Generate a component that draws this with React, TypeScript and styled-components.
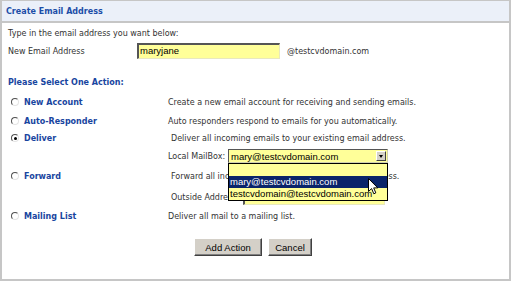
import styled, { createGlobalStyle } from "styled-components";

const GlobalStyle = createGlobalStyle`
  body {
    margin: 0;
    background: #fff;
  }
`;

const verdana = `"DejaVu Sans", Verdana, sans-serif`;
const arial = `"Liberation Sans", Arial, sans-serif`;

const Panel = styled.div`
  width: 511px;
  height: 281px;
  box-sizing: border-box;
  border: 2px solid #c6c6c6;
  border-top-width: 1px;
  font-family: ${verdana};
  font-size: 8px;
  color: #333;
`;

const Header = styled.div`
  height: 20px;
  line-height: 21px;
  padding-left: 4px;
  background: #ebf0f9;
  border-bottom: 2px solid #c6c6c6;
  font-weight: bold;
  color: #1c4ea8;
`;

const Body = styled.div`
  padding: 4px 0 0 6px;
`;

const Line = styled.div`
  line-height: 14px;
`;

const EmailRow = styled.div`
  display: flex;
  align-items: center;
  height: 16px;
  margin-top: 2px;
`;

const FieldLabel = styled.div<{ $w: number }>`
  width: ${(p) => p.$w}px;
  flex: none;
`;

const YellowInput = styled.div<{ $w: number }>`
  width: ${(p) => p.$w}px;
  height: 16px;
  box-sizing: border-box;
  background: #ffff99;
  border-style: solid;
  border-width: 2px 1px 1px 2px;
  border-color: #555 #e8e8c0 #e8e8c0 #555;
  font-family: ${arial};
  font-size: 9.5px;
  color: #000;
  line-height: 12px;
  padding-left: 1px;
  flex: none;
`;

const Domain = styled.div`
  margin-left: 7px;
`;

const SectionTitle = styled.div`
  margin-top: 17px;
  line-height: 14px;
  font-weight: bold;
  color: #1845a0;
`;

const Actions = styled.div`
  margin-top: 2px;
`;

const ActionRow = styled.div<{ $h: number }>`
  display: flex;
  align-items: center;
  height: ${(p) => p.$h}px;
`;

const RadioCell = styled.div`
  width: 16px;
  flex: none;
  padding-left: 3px;
  box-sizing: border-box;
  display: flex;
  align-items: center;
`;

const Radio = styled.span<{ $checked?: boolean }>`
  position: relative;
  width: 8px;
  height: 8px;
  box-sizing: border-box;
  border-radius: 50%;
  border: 1px solid;
  border-color: #505050 #e4e4e4 #e4e4e4 #505050;
  background: #fff;
  &::after {
    content: "";
    display: ${(p) => (p.$checked ? "block" : "none")};
    position: absolute;
    left: 1.5px;
    top: 1.5px;
    width: 3px;
    height: 3px;
    border-radius: 50%;
    background: #000;
  }
`;

const ActionLabel = styled.div`
  width: 144px;
  flex: none;
  font-weight: bold;
  color: #1845a0;
`;

const Desc = styled.div<{ $indent?: number }>`
  padding-left: ${(p) => p.$indent ?? 0}px;
  white-space: nowrap;
  display: flex;
  align-items: center;
`;

const SelectWrap = styled.div`
  position: relative;
  width: 160px;
  height: 14px;
`;

const SelectBox = styled.div`
  width: 160px;
  height: 14px;
  box-sizing: border-box;
  display: flex;
  align-items: center;
  background: #ffff99;
  border-style: solid;
  border-width: 1px;
  border-color: #555 #d0d0b0 #d0d0b0 #555;
  font-family: ${arial};
  font-size: 9.5px;
  color: #000;
  padding-left: 2px;
`;

const SelectText = styled.span`
  flex: 1;
`;

const ArrowButton = styled.span`
  width: 10px;
  height: 10px;
  margin-right: 1px;
  box-sizing: border-box;
  background: #d4d0c8;
  border: 1px solid;
  border-color: #fff #404040 #404040 #fff;
  display: flex;
  align-items: center;
  justify-content: center;
  &::after {
    content: "";
    border-left: 2.5px solid transparent;
    border-right: 2.5px solid transparent;
    border-top: 3px solid #000;
  }
`;

const DropList = styled.div`
  position: absolute;
  left: 0;
  top: 100%;
  width: 160px;
  box-sizing: border-box;
  border: 1px solid #000;
  background: #ffff99;
  z-index: 5;
  font-family: ${arial};
  font-size: 9.5px;
  color: #000;
`;

const DropItem = styled.div<{ $active?: boolean }>`
  height: 12px;
  line-height: 12px;
  padding-left: 1px;
  white-space: nowrap;
  background: ${(p) => (p.$active ? "#0a246a" : "transparent")};
  color: ${(p) => (p.$active ? "#fff" : "#000")};
`;

const Cursor = styled.svg`
  position: absolute;
  left: 139px;
  top: 14px;
`;

const ButtonRow = styled.div`
  display: flex;
  justify-content: center;
  gap: 6px;
  margin-top: 14px;
  padding-right: 11px;
`;

const Button = styled.button<{ $w: number }>`
  width: ${(p) => p.$w}px;
  height: 18px;
  padding: 0;
  background: #d4d0c8;
  border: 1px solid;
  border-color: #fff #404040 #404040 #fff;
  box-shadow: inset -1px -1px #808080;
  font-family: ${arial};
  font-size: 9.5px;
  color: #000;
`;

export default function App() {
  return (
    <>
      <GlobalStyle />
      <Panel>
        <Header>Create Email Address</Header>
        <Body>
          <Line>Type in the email address you want below:</Line>
          <EmailRow>
            <FieldLabel $w={129}>New Email Address</FieldLabel>
            <YellowInput $w={143}>maryjane</YellowInput>
            <Domain>@testcvdomain.com</Domain>
          </EmailRow>

          <SectionTitle>Please Select One Action:</SectionTitle>
          <Actions>
            <ActionRow $h={20}>
              <RadioCell><Radio /></RadioCell>
              <ActionLabel>New Account</ActionLabel>
              <Desc>Create a new email account for receiving and sending emails.</Desc>
            </ActionRow>
            <ActionRow $h={18}>
              <RadioCell><Radio /></RadioCell>
              <ActionLabel>Auto-Responder</ActionLabel>
              <Desc>Auto responders respond to emails for you automatically.</Desc>
            </ActionRow>
            <ActionRow $h={16}>
              <RadioCell><Radio $checked /></RadioCell>
              <ActionLabel>Deliver</ActionLabel>
              <Desc $indent={3}>Deliver all incoming emails to your existing email address.</Desc>
            </ActionRow>
            <ActionRow $h={20}>
              <RadioCell />
              <ActionLabel />
              <Desc>
                <FieldLabel $w={60}>Local MailBox:</FieldLabel>
                <SelectWrap>
                  <SelectBox>
                    <SelectText>mary@testcvdomain.com</SelectText>
                    <ArrowButton />
                  </SelectBox>
                  <DropList>
                    <DropItem>&nbsp;</DropItem>
                    <DropItem $active>mary@testcvdomain.com</DropItem>
                    <DropItem>testcvdomain@testcvdomain.com</DropItem>
                    <Cursor width="11" height="17" viewBox="0 0 11 17">
                      <path
                        d="M0.5 0.5 L0.5 13.5 L3.6 10.6 L5.8 15.8 L7.8 14.9 L5.7 9.9 L9.8 9.9 Z"
                        fill="#fff"
                        stroke="#000"
                        strokeWidth="1"
                      />
                    </Cursor>
                  </DropList>
                </SelectWrap>
              </Desc>
            </ActionRow>
            <ActionRow $h={20}>
              <RadioCell><Radio /></RadioCell>
              <ActionLabel>Forward</ActionLabel>
              <Desc $indent={3}>Forward all incoming emails to an outside email address.</Desc>
            </ActionRow>
            <ActionRow $h={22}>
              <RadioCell />
              <ActionLabel />
              <Desc $indent={3}>
                <FieldLabel $w={72}>Outside Address:</FieldLabel>
                <YellowInput $w={142} />
              </Desc>
            </ActionRow>
            <ActionRow $h={16}>
              <RadioCell><Radio /></RadioCell>
              <ActionLabel>Mailing List</ActionLabel>
              <Desc>Deliver all mail to a mailing list.</Desc>
            </ActionRow>
          </Actions>

          <ButtonRow>
            <Button $w={68}>Add Action</Button>
            <Button $w={44}>Cancel</Button>
          </ButtonRow>
        </Body>
      </Panel>
    </>
  );
}
